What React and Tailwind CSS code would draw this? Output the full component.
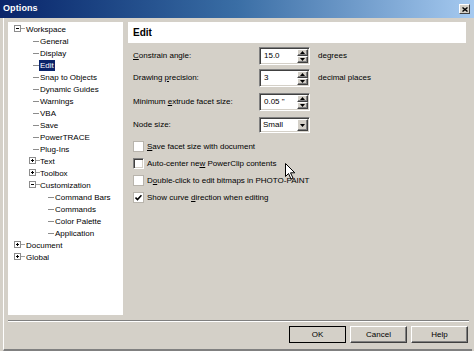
import React from 'react'

const tree = [
  { label: 'Workspace', level: 0, exp: 'minus' },
  { label: 'General', level: 1 },
  { label: 'Display', level: 1 },
  { label: 'Edit', level: 1, selected: true },
  { label: 'Snap to Objects', level: 1 },
  { label: 'Dynamic Guides', level: 1 },
  { label: 'Warnings', level: 1 },
  { label: 'VBA', level: 1 },
  { label: 'Save', level: 1 },
  { label: 'PowerTRACE', level: 1 },
  { label: 'Plug-Ins', level: 1 },
  { label: 'Text', level: 1, exp: 'plus' },
  { label: 'Toolbox', level: 1, exp: 'plus' },
  { label: 'Customization', level: 1, exp: 'minus' },
  { label: 'Command Bars', level: 2 },
  { label: 'Commands', level: 2 },
  { label: 'Color Palette', level: 2 },
  { label: 'Application', level: 2 },
  { label: 'Document', level: 0, exp: 'plus' },
  { label: 'Global', level: 0, exp: 'plus' },
]

const textPad = { 0: 'pl-[18px]', 1: 'pl-[32px]', 2: 'pl-[47px]' }
const expPos = { 0: 'left-[6px]', 1: 'left-[21px]' }
const dashPos = { 0: 'left-[13px]', 1: 'left-[25px]', 2: 'left-[40px]' }

function Expander({ kind, level }) {
  return (
    <span
      className={`absolute ${expPos[level]} top-[2px] w-[7px] h-[7px] border border-[#8c8c8c] bg-white flex items-center justify-center`}
    >
      <span className="absolute w-[3px] h-px bg-black" />
      {kind === 'plus' && <span className="absolute w-px h-[3px] bg-black" />}
    </span>
  )
}

function TreeRow({ item }) {
  return (
    <div className={`relative h-[12px] flex items-center ${textPad[item.level]}`}>
      {item.exp ? (
        <>
          <Expander kind={item.exp} level={item.level} />
          <span
            className={`absolute ${item.level === 0 ? 'left-[13px]' : 'left-[28px]'} top-[5px] w-[4px] h-px bg-[#a0a0a0]`}
          />
        </>
      ) : (
        <span className={`absolute ${dashPos[item.level]} top-[6px] w-[6px] h-px bg-[#8c8c8c]`} />
      )}
      <span
        className={
          item.selected
            ? 'bg-[#0a246a] text-white px-px -ml-px leading-[11px]'
            : 'text-black leading-[11px]'
        }
      >
        {item.label}
      </span>
    </div>
  )
}

function U({ children }) {
  return <span className="underline underline-offset-1">{children}</span>
}

const sunken =
  'border border-t-[#808080] border-l-[#808080] border-b-white border-r-white shadow-[inset_1px_1px_0_#404040,inset_-1px_-1px_0_#d4d0c8]'

const raised =
  'border border-t-white border-l-white border-b-[#404040] border-r-[#404040] shadow-[inset_-1px_-1px_0_#808080]'

function Tri({ dir }) {
  return (
    <svg width="5" height="3" viewBox="0 0 5 3">
      {dir === 'up' ? <path d="M2.5 0L5 3H0z" fill="#000" /> : <path d="M0 0h5L2.5 3z" fill="#000" />}
    </svg>
  )
}

function SpinInput({ value }) {
  return (
    <div className={`w-[51px] h-[18px] bg-white flex ${sunken}`}>
      <span className="flex-1 pl-[4px] flex items-center">{value}</span>
      <div className="w-[11px] flex flex-col m-[1px]">
        <div className={`flex-1 bg-[#d4d0c8] flex items-center justify-center ${raised}`}>
          <Tri dir="up" />
        </div>
        <div className={`flex-1 bg-[#d4d0c8] flex items-center justify-center ${raised}`}>
          <Tri dir="down" />
        </div>
      </div>
    </div>
  )
}

function Row({ label, children, className = '' }) {
  return (
    <div className={`flex items-center ${className}`}>
      <span className="w-[126px]">{label}</span>
      {children}
    </div>
  )
}

function Check({ checked, dark, children }) {
  return (
    <div className="h-[17px] flex items-center">
      <span
        className={`w-[11px] h-[11px] bg-white flex items-center justify-center ${
          dark ? sunken : 'border border-[#b8b4ac]'
        }`}
      >
        {checked && (
          <svg width="7" height="7" viewBox="0 0 7 7">
            <path d="M0.5 3.5L2.5 5.5L6.5 1.2" stroke="#000" strokeWidth="1.6" fill="none" />
          </svg>
        )}
      </span>
      <span className="ml-[3px]">{children}</span>
    </div>
  )
}

function Button({ children, primary }) {
  return (
    <div
      className={`w-[57px] h-[17px] bg-[#d4d0c8] flex items-center justify-center ${
        primary ? 'outline outline-1 outline-black -outline-offset-1 border border-t-white border-l-white border-b-[#404040] border-r-[#404040]' : raised
      }`}
    >
      {children}
    </div>
  )
}

export default function App() {
  return (
    <div className="relative w-[474px] h-[351px] bg-[#d4d0c8] flex flex-col overflow-hidden font-['Liberation_Sans',Arial,sans-serif] text-[8px] text-black">
      {/* title bar */}
      <div className="h-[18px] shrink-0 flex items-center bg-gradient-to-r from-[#0a246a] via-[#3a6ea5] to-[#a6caf0] pl-[3px] pr-[4px]">
        <span className="text-white font-bold text-[9px] tracking-[0.1px]">Options</span>
        <div className="ml-auto w-[11px] h-[10px] bg-[#d4d0c8] border border-t-white border-l-white border-b-[#404040] border-r-[#404040] flex items-center justify-center">
          <svg width="6" height="5" viewBox="0 0 6 5">
            <path d="M0.5 0.5L5.5 4.5M5.5 0.5L0.5 4.5" stroke="#000" strokeWidth="1.4" />
          </svg>
        </div>
      </div>

      {/* body */}
      <div className="flex-1 flex flex-col ml-[3px] mr-[2px] border-l border-l-white border-b-2 border-b-[#808080] pl-[4px] pt-[4px]">
        <div className="flex h-[293px] gap-[5px]">
          {/* tree */}
          <div className="w-[115px] bg-white pt-[1px]">
            {tree.map((item) => (
              <TreeRow key={item.label} item={item} />
            ))}
          </div>

          {/* panel */}
          <div className="w-[338px] flex flex-col pl-[5px] relative">
            <div className="h-[21px] bg-white -ml-[5px] pl-[5px] flex items-center font-bold text-[10px]">Edit</div>

            <Row label={<><U>C</U>onstrain angle:</>} className="mt-[4px]">
              <SpinInput value="15.0" />
              <span className="ml-[8px]">degrees</span>
            </Row>
            <Row label={<>Drawing <U>p</U>recision:</>} className="mt-[4px]">
              <SpinInput value="3" />
              <span className="ml-[8px]">decimal places</span>
            </Row>
            <Row label={<>Minimum <U>e</U>xtrude facet size:</>} className="mt-[6px]">
              <SpinInput value='0.05 "' />
            </Row>
            <Row label="Node size:" className="mt-[6px]">
              <div className={`w-[51px] h-[16px] bg-white flex ${sunken}`}>
                <span className="flex-1 pl-[3px] flex items-center">Small</span>
                <div className={`w-[11px] m-[1px] bg-[#d4d0c8] flex items-center justify-center ${raised}`}>
                  <Tri dir="down" />
                </div>
              </div>
            </Row>

            <div className="mt-[5px] flex flex-col">
              <Check>
                <U>S</U>ave facet size with document
              </Check>
              <Check dark>
                Auto-center ne<U>w</U> PowerClip contents
              </Check>
              <Check>
                D<U>o</U>uble-click to edit bitmaps in PHOTO-PAINT
              </Check>
              <Check checked>
                Show curve <U>d</U>irection when editing
              </Check>
            </div>

            {/* mouse cursor */}
            <svg
              className="absolute left-[157px] top-[141px]"
              width="11"
              height="17"
              viewBox="0 0 11 17"
            >
              <path d="M0.5 0.5V13.5L3.5 10.5L6 16L8 15L5.5 9.8H9.8Z" fill="#fff" stroke="#000" strokeWidth="1" />
            </svg>
          </div>
        </div>

        {/* separator */}
        <div className="mt-[5px] mr-[3px] border-t border-t-[#808080] border-b border-b-white" />

        {/* buttons */}
        <div className="mt-[4px] flex justify-end gap-[4px] pr-[4px]">
          <Button primary>OK</Button>
          <Button>Cancel</Button>
          <Button>Help</Button>
        </div>
      </div>
    </div>
  )
}
